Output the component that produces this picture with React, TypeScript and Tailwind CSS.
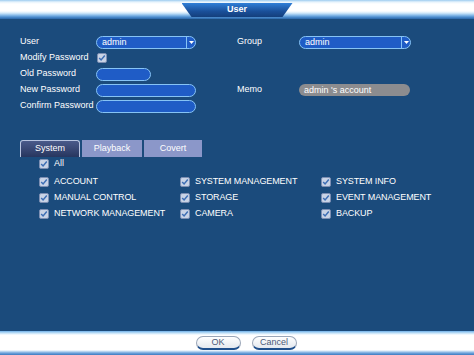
import { ReactNode } from "react"

const font = { fontFamily: '"Liberation Sans", Arial, sans-serif' }

function Check() {
  return (
    <svg width="10" height="10" viewBox="0 0 10 10" className="shrink-0">
      <rect x="0.5" y="0.5" width="9" height="9" rx="1.5" fill="#c9d3e6" stroke="#7d8fb3" />
      <path d="M2.2 5 L4.1 7 L7.8 2.6" fill="none" stroke="#3f6fb5" strokeWidth="1.5" />
    </svg>
  )
}

function Select({ value, width }: { value: string; width: string }) {
  return (
    <div className={`${width} h-[13px] flex items-center rounded-full border border-[#86c3f5] bg-[#1f5cc6] overflow-hidden`}>
      <span className="flex-1 pl-[5px] text-[9px] text-white leading-none">{value}</span>
      <div className="h-full w-[9px] border-l border-[#86c3f5] flex items-center justify-center">
        <svg width="5" height="3" viewBox="0 0 5 3"><path d="M0 0 H5 L2.5 3 Z" fill="#fff" /></svg>
      </div>
    </div>
  )
}

function Input({ width }: { width: string }) {
  return <div className={`${width} h-[13px] rounded-full border border-[#86c3f5] bg-[#1f5cc6]`} />
}

function Row({ label, children }: { label: string; children?: ReactNode }) {
  return (
    <div className="h-4 flex items-center">
      <span className="w-[76px] shrink-0 text-[9px] text-white">{label}</span>
      {children}
    </div>
  )
}

function Perm({ label }: { label: string }) {
  return (
    <div className="h-4 flex items-center gap-[5px]">
      <Check />
      <span className="text-[9px] text-white uppercase tracking-[-0.1px]">{label}</span>
    </div>
  )
}

const perms = [
  "ACCOUNT", "SYSTEM MANAGEMENT", "SYSTEM INFO",
  "MANUAL CONTROL", "STORAGE", "EVENT MANAGEMENT",
  "NETWORK MANAGEMENT", "CAMERA", "BACKUP",
]

export default function App() {
  return (
    <div className="w-[474px] h-[355px] flex flex-col overflow-hidden bg-[#1b4b7c]" style={font}>
      {/* title band */}
      <div className="h-[19px] shrink-0 flex justify-center bg-[linear-gradient(to_bottom,#9ccbef_0px,#e6f3fc_2px,#ffffff_4px,#ffffff_11px,#d4eafa_13px,#8fc0ec_15px,#4f8fd0_17px,#2a66a8_19px)]">
        <div className="mt-[3px] w-[111px] h-[14px] flex items-center justify-center bg-[linear-gradient(to_bottom,#2f7fd8,#1a4f99_60%,#143f7c)] [clip-path:polygon(0_0,100%_0,91%_100%,9%_100%)]">
          <span className="text-[9px] font-bold text-white">User</span>
        </div>
      </div>

      {/* body */}
      <div className="flex-1 flex flex-col pt-[15px]">
        <div className="flex pl-5">
          <div className="w-[217px] flex flex-col">
            <Row label="User"><Select value="admin" width="w-[100px]" /></Row>
            <Row label="Modify Password"><span className="ml-px"><Check /></span></Row>
            <Row label="Old Password"><Input width="w-[55px]" /></Row>
            <Row label="New Password"><Input width="w-[100px]" /></Row>
            <Row label="Confirm Password"><Input width="w-[100px]" /></Row>
          </div>
          <div className="flex flex-col">
            <div className="h-4 flex items-center">
              <span className="w-[62px] text-[9px] text-white">Group</span>
              <Select value="admin" width="w-[112px]" />
            </div>
            <div className="h-8" />
            <div className="h-4 flex items-center">
              <span className="w-[62px] text-[9px] text-white">Memo</span>
              <div className="w-[111px] h-[12px] rounded-full bg-[#8c8c8f] flex items-center pl-[5px]">
                <span className="text-[9px] text-white leading-none">admin 's account</span>
              </div>
            </div>
          </div>
        </div>

        {/* tabs */}
        <div className="flex gap-[2px] pl-5 mt-[26px]">
          <div className="w-[60px] h-[17px] flex items-center justify-center rounded-t-[3px] border border-b-0 border-[#b8c4e0] bg-[linear-gradient(to_bottom,#4a5a8a,#27365f)] text-[9px] text-white">System</div>
          <div className="w-[60px] h-[17px] flex items-center justify-center bg-[#8b97c9] text-[9px] text-white">Playback</div>
          <div className="w-[58px] h-[17px] flex items-center justify-center bg-[#8b97c9] text-[9px] text-white">Covert</div>
        </div>

        <div className="pl-[39px]">
          <div className="h-[13px] flex items-center gap-[5px]">
            <Check />
            <span className="text-[9px] text-white">All</span>
          </div>
          <div className="grid grid-cols-[141px_141px_141px] mt-[4px]">
            {perms.map((p) => <Perm key={p} label={p} />)}
          </div>
        </div>
      </div>

      {/* button band */}
      <div className="h-[24px] shrink-0 flex justify-center items-start gap-[11px] pt-[5px] pl-[18px] bg-[linear-gradient(to_bottom,#6fb0e8_0px,#bfe0f8_2px,#ffffff_4px,#ffffff_19px,#cfe4f6_20px,#6fa4dc_22px,#3c7ac0_24px)]">
        <button className="w-[45px] h-[14px] rounded-full border border-[#9aa6b8] border-b-2 border-b-[#1f4f8c] bg-[linear-gradient(to_bottom,#ffffff,#e4e8ee)] text-[9px] leading-none text-[#4d5a78]">OK</button>
        <button className="w-[45px] h-[14px] rounded-full border border-[#9aa6b8] border-b-2 border-b-[#1f4f8c] bg-[linear-gradient(to_bottom,#ffffff,#e4e8ee)] text-[9px] leading-none text-[#4d5a78]">Cancel</button>
      </div>
    </div>
  )
}
